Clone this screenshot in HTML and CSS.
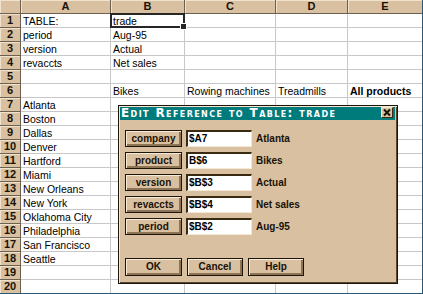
FILE: index.html
```html
<!DOCTYPE html>
<html>
<head>
<meta charset="utf-8">
<link rel="stylesheet" href="styles.css">
</head>
<body>
<div class="sheet">
  <div class="grid">
    <div class="hd"></div><div class="hd">A</div><div class="hd">B</div><div class="hd">C</div><div class="hd">D</div><div class="hd">E</div>
    <div class="hd">1</div><div class="c">TABLE:</div><div class="c active">trade</div><div class="c"></div><div class="c"></div><div class="c"></div>
    <div class="hd">2</div><div class="c">period</div><div class="c">Aug-95</div><div class="c"></div><div class="c"></div><div class="c"></div>
    <div class="hd">3</div><div class="c">version</div><div class="c">Actual</div><div class="c"></div><div class="c"></div><div class="c"></div>
    <div class="hd">4</div><div class="c">revaccts</div><div class="c">Net sales</div><div class="c"></div><div class="c"></div><div class="c"></div>
    <div class="hd">5</div><div class="c"></div><div class="c"></div><div class="c"></div><div class="c"></div><div class="c"></div>
    <div class="hd">6</div><div class="c"></div><div class="c">Bikes</div><div class="c">Rowing machines</div><div class="c">Treadmills</div><div class="c b">All products</div>
    <div class="hd">7</div><div class="c">Atlanta</div><div class="c"></div><div class="c"></div><div class="c"></div><div class="c"></div>
    <div class="hd">8</div><div class="c">Boston</div><div class="c"></div><div class="c"></div><div class="c"></div><div class="c"></div>
    <div class="hd">9</div><div class="c">Dallas</div><div class="c"></div><div class="c"></div><div class="c"></div><div class="c"></div>
    <div class="hd">10</div><div class="c">Denver</div><div class="c"></div><div class="c"></div><div class="c"></div><div class="c"></div>
    <div class="hd">11</div><div class="c">Hartford</div><div class="c"></div><div class="c"></div><div class="c"></div><div class="c"></div>
    <div class="hd">12</div><div class="c">Miami</div><div class="c"></div><div class="c"></div><div class="c"></div><div class="c"></div>
    <div class="hd">13</div><div class="c">New Orleans</div><div class="c"></div><div class="c"></div><div class="c"></div><div class="c"></div>
    <div class="hd">14</div><div class="c">New York</div><div class="c"></div><div class="c"></div><div class="c"></div><div class="c"></div>
    <div class="hd">15</div><div class="c">Oklahoma City</div><div class="c"></div><div class="c"></div><div class="c"></div><div class="c"></div>
    <div class="hd">16</div><div class="c">Philadelphia</div><div class="c"></div><div class="c"></div><div class="c"></div><div class="c"></div>
    <div class="hd">17</div><div class="c">San Francisco</div><div class="c"></div><div class="c"></div><div class="c"></div><div class="c"></div>
    <div class="hd">18</div><div class="c">Seattle</div><div class="c"></div><div class="c"></div><div class="c"></div><div class="c"></div>
    <div class="hd">19</div><div class="c"></div><div class="c"></div><div class="c"></div><div class="c"></div><div class="c"></div>
    <div class="hd">20</div><div class="c"></div><div class="c"></div><div class="c"></div><div class="c"></div><div class="c"></div>
  </div>

  <div class="dialog">
    <div class="title">
      <span class="title-text">Edit Reference to Table: trade</span>
      <div class="close"><svg width="10" height="9" viewBox="0 0 10 9"><path d="M2 1.5 L8 7.5 M8 1.5 L2 7.5" stroke="#1a1208" stroke-width="2" fill="none"/></svg></div>
    </div>
    <div class="fields">
      <div class="field"><div class="btn">company</div><div class="inp">$A7</div><div class="lbl">Atlanta</div></div>
      <div class="field"><div class="btn">product</div><div class="inp">B$6</div><div class="lbl">Bikes</div></div>
      <div class="field"><div class="btn">version</div><div class="inp">$B$3</div><div class="lbl">Actual</div></div>
      <div class="field"><div class="btn">revaccts</div><div class="inp">$B$4</div><div class="lbl">Net sales</div></div>
      <div class="field"><div class="btn">period</div><div class="inp">$B$2</div><div class="lbl">Aug-95</div></div>
    </div>
    <div class="actions">
      <div class="btn big">OK</div>
      <div class="btn big">Cancel</div>
      <div class="btn big">Help</div>
    </div>
  </div>
</div>
</body>
</html>
```

FILE: styles.css
```css
* { box-sizing: border-box; }
body {
  margin: 0;
  background: #fff;
  font-family: "Liberation Sans", Arial, sans-serif;
}
.sheet {
  position: relative;
  width: 423px;
  height: 294px;
  overflow: hidden;
  background: #fff;
}
.sheet::after {
  content: "";
  position: absolute;
  inset: 0;
  box-shadow: inset -1px -1px 0 #2a5878;
  pointer-events: none;
}
.grid {
  display: grid;
  grid-template-columns: 21px 90px 74px 91px 72px 75px;
  grid-auto-rows: 14px;
}
.c {
  border-right: 1px solid #c8c8c8;
  border-bottom: 1px solid #c8c8c8;
  font-size: 10.5px;
  line-height: 11px;
  padding: 2px 0 0 2px;
  white-space: nowrap;
  color: #000;
}
.b { font-weight: bold; }
.hd {
  background: #d8c0a0;
  border-right: 1px solid #6c6050;
  border-bottom: 1px solid #6c6050;
  box-shadow: inset 1px 1px 0 #f0e2cc;
  font-weight: bold;
  font-size: 11px;
  line-height: 13px;
  text-align: center;
  color: #1a1208;
}
.active { position: relative; }
.active::before {
  content: "";
  position: absolute;
  left: -1px; top: -1px; right: -1px; bottom: -1px;
  border: 2px solid #262626;
}
.active::after {
  content: "";
  position: absolute;
  right: -3px; bottom: -3px;
  width: 5px; height: 5px;
  background: #262626;
  border: 1px solid #fff;
}

.dialog {
  position: absolute;
  left: 118px;
  top: 105px;
  width: 280px;
  height: 179px;
  background: #d8c0a0;
  border: 1px solid #1e160a;
  box-shadow: inset 1px 1px 0 #f4e8d4, inset -1px -1px 0 #5a4630;
  padding: 1px 2px 0 1px;
  display: flex;
  flex-direction: column;
  color: #1a1208;
}
.title {
  height: 13px;
  background: #007b7b;
  display: flex;
  align-items: flex-start;
  justify-content: space-between;
  padding: 0 2px 0 1px;
}
.title-text {
  color: #fff;
  font-family: "DejaVu Sans", sans-serif;
  font-weight: bold;
  font-size: 12px;
  font-variant: small-caps;
  letter-spacing: 1.4px;
  line-height: 13px;
  white-space: nowrap;
}
.close {
  width: 12px;
  height: 11px;
  background: #d8c0a0;
  border-top: 1px solid #f4e8d4;
  border-left: 1px solid #f4e8d4;
  border-right: 1px solid #3a2a12;
  border-bottom: 1px solid #3a2a12;
  display: flex;
  align-items: center;
  justify-content: center;
}
.fields {
  display: flex;
  flex-direction: column;
  gap: 5px;
  margin: 10px 0 0 5px;
}
.field {
  display: flex;
  align-items: center;
  height: 17px;
}
.btn {
  width: 57px;
  height: 17px;
  background: #d8c0a0;
  border: 1px solid #1e160a;
  box-shadow: inset 1px 1px 0 #f6ead6, inset -2px -2px 0 #8c7454;
  font-size: 10px;
  font-weight: bold;
  line-height: 15px;
  text-align: center;
  color: #1a1208;
}
.inp {
  width: 66px;
  height: 17px;
  margin-left: 4px;
  background: #fff;
  border-top: 2px solid #3a2a12;
  border-left: 2px solid #3a2a12;
  border-right: 1px solid #f4e8d4;
  border-bottom: 1px solid #f4e8d4;
  font-size: 10px;
  font-weight: bold;
  line-height: 14px;
  padding-left: 1px;
  color: #000;
}
.lbl {
  margin-left: 4px;
  font-size: 10px;
  font-weight: bold;
}
.actions {
  display: flex;
  gap: 5px;
  margin: 23px 0 0 5px;
}
.btn.big {
  height: 18px;
  width: 56px;
  line-height: 16px;
}
.btn.big:first-child { width: 57px; }
```
